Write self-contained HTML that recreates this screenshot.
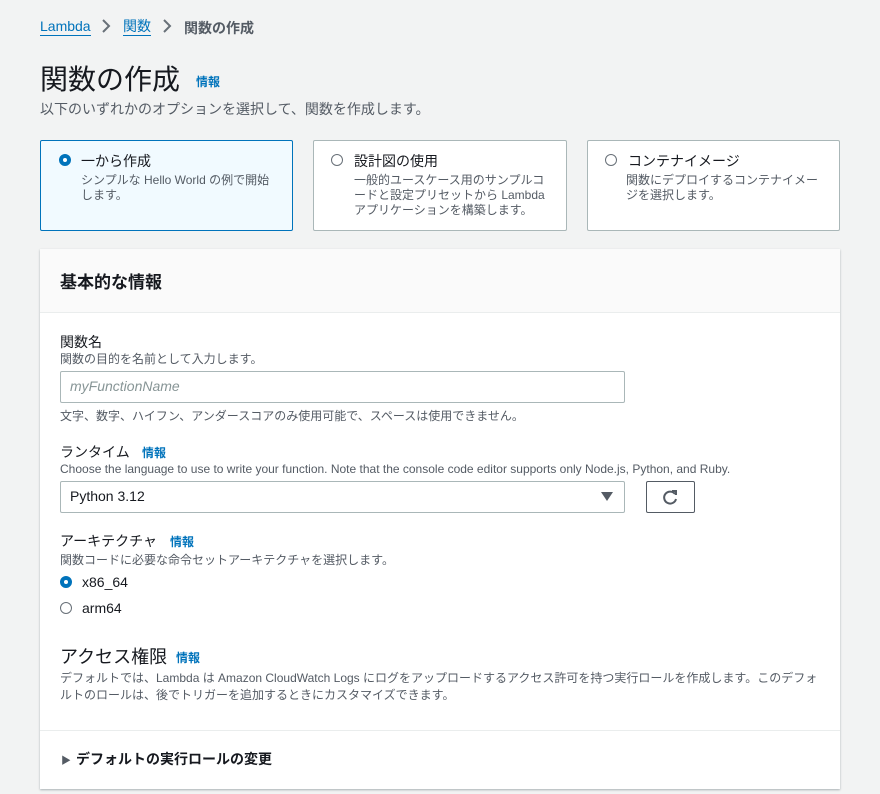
<!DOCTYPE html>
<html><head><meta charset="utf-8"><style>
body{margin:0;width:880px;height:794px;background:#f2f3f3;font-family:"Liberation Sans","Noto Sans CJK JP",sans-serif;color:#16191f;position:relative;overflow:hidden}
.a{position:absolute;white-space:nowrap}
.link{color:#0073bb;font-weight:bold;font-size:12px}
.s{font-size:12px;color:#545b64}
.card{position:absolute;top:140px;height:91px;box-sizing:border-box;border:1px solid #aab7b8;background:#fff;border-radius:2px}
.card.sel{border-color:#0073bb;background:#f1faff}
.rad{position:absolute;width:12px;height:12px;border:1px solid #687078;border-radius:50%;box-sizing:border-box;background:#fff}
.rad.on{border:4px solid #0073bb}
.ct{position:absolute;left:40px;top:10px;font-size:14px}
.cd{position:absolute;left:40px;top:32px;font-size:12px;color:#545b64;line-height:15px;white-space:normal;width:200px}
</style></head><body>
<div class="a" style="left:40px;top:18px;font-size:14px;color:#0073bb;border-bottom:1px solid #0073bb;line-height:17px">Lambda</div>
<svg class="a" style="left:100px;top:18px" width="12" height="16" viewBox="0 0 12 16"><path d="M3 2 L9 8 L3 14" fill="none" stroke="#687078" stroke-width="2"/></svg>
<div class="a" style="left:123px;top:18px;font-size:14px;color:#0073bb;border-bottom:1px solid #0073bb;line-height:17px">関数</div>
<svg class="a" style="left:161px;top:18px" width="12" height="16" viewBox="0 0 12 16"><path d="M3 2 L9 8 L3 14" fill="none" stroke="#687078" stroke-width="2"/></svg>
<div class="a" style="left:184px;top:18px;font-size:14px;color:#545b64;font-weight:bold">関数の作成</div>
<div class="a" style="left:40px;top:58px;font-size:28px">関数の作成</div>
<div class="a link" style="left:196px;top:73px">情報</div>
<div class="a" style="left:40px;top:99px;font-size:14px;color:#545b64">以下のいずれかのオプションを選択して、関数を作成します。</div>

<div class="card sel" style="left:40px;width:253px"><div class="rad on" style="left:18px;top:13px"></div><div class="ct">一から作成</div><div class="cd">シンプルな Hello World の例で開始します。</div></div>
<div class="card" style="left:313px;width:254px"><div class="rad" style="left:17px;top:13px"></div><div class="ct">設計図の使用</div><div class="cd">一般的ユースケース用のサンプルコードと設定プリセットから Lambda アプリケーションを構築します。</div></div>
<div class="card" style="left:587px;width:253px"><div class="rad" style="left:17px;top:13px"></div><div class="ct">コンテナイメージ</div><div class="cd" style="left:38px">関数にデプロイするコンテナイメージを選択します。</div></div>

<div class="a" style="left:40px;top:249px;width:800px;height:540px;background:#fff;box-shadow:0 1px 2px rgba(0,28,36,.3)">
<div style="height:63px;background:#fafafa;border-bottom:1px solid #eaeded"></div>
</div>
<div class="a" style="left:60px;top:268px;font-size:17px;font-weight:bold">基本的な情報</div>
<div class="a" style="left:60px;top:332px;font-size:14px">関数名</div>
<div class="a s" style="left:60px;top:350px">関数の目的を名前として入力します。</div>
<div class="a" style="left:60px;top:371px;width:565px;height:32px;box-sizing:border-box;border:1px solid #aab7b8;border-radius:2px;background:#fff"></div>
<div class="a" style="left:70px;top:378px;font-size:14px;color:#879596;font-style:italic">myFunctionName</div>
<div class="a s" style="left:60px;top:407px">文字、数字、ハイフン、アンダースコアのみ使用可能で、スペースは使用できません。</div>
<div class="a" style="left:60px;top:442px;font-size:14px">ランタイム</div>
<div class="a link" style="left:142px;top:444px">情報</div>
<div class="a s" style="left:60px;top:462px">Choose the language to use to write your function. Note that the console code editor supports only Node.js, Python, and Ruby.</div>
<div class="a" style="left:60px;top:481px;width:565px;height:32px;box-sizing:border-box;border:1px solid #aab7b8;border-radius:2px;background:#fff"></div>
<div class="a" style="left:70px;top:488px;font-size:14px">Python 3.12</div>
<svg class="a" style="left:601px;top:492px" width="12" height="10" viewBox="0 0 12 10"><path d="M0 0 L12 0 L6 9 Z" fill="#545b64"/></svg>
<div class="a" style="left:646px;top:481px;width:49px;height:32px;box-sizing:border-box;border:1px solid #545b64;border-radius:2px;background:#fff">
<svg width="47" height="30" viewBox="0 0 47 30"><path d="M28 12 A6 6 0 1 0 29 17" fill="none" stroke="#545b64" stroke-width="2"/><path d="M25 9 L29 9 L29 13" fill="none" stroke="#545b64" stroke-width="2"/></svg></div>
<div class="a" style="left:60px;top:531px;font-size:14px">アーキテクチャ</div>
<div class="a link" style="left:170px;top:533px">情報</div>
<div class="a s" style="left:60px;top:551px">関数コードに必要な命令セットアーキテクチャを選択します。</div>
<div class="rad on" style="left:60px;top:576px"></div>
<div class="a" style="left:82px;top:574px;font-size:14px">x86_64</div>
<div class="rad" style="left:60px;top:602px"></div>
<div class="a" style="left:82px;top:600px;font-size:14px">arm64</div>
<div class="a" style="left:60px;top:643px;font-size:18px">アクセス権限</div>
<div class="a link" style="left:176px;top:649px">情報</div>
<div class="a s" style="left:60px;top:670px;line-height:17px;white-space:normal;width:765px">デフォルトでは、Lambda は Amazon CloudWatch Logs にログをアップロードするアクセス許可を持つ実行ロールを作成します。このデフォルトのロールは、後でトリガーを追加するときにカスタマイズできます。</div>
<div class="a" style="left:40px;top:730px;width:800px;border-top:1px solid #eaeded"></div>
<div class="a" style="left:61px;top:752px;font-size:10px;color:#545b64">&#x25B6;</div>
<div class="a" style="left:76px;top:749px;font-size:14px;font-weight:bold;color:#16191f">デフォルトの実行ロールの変更</div>
</body></html>
